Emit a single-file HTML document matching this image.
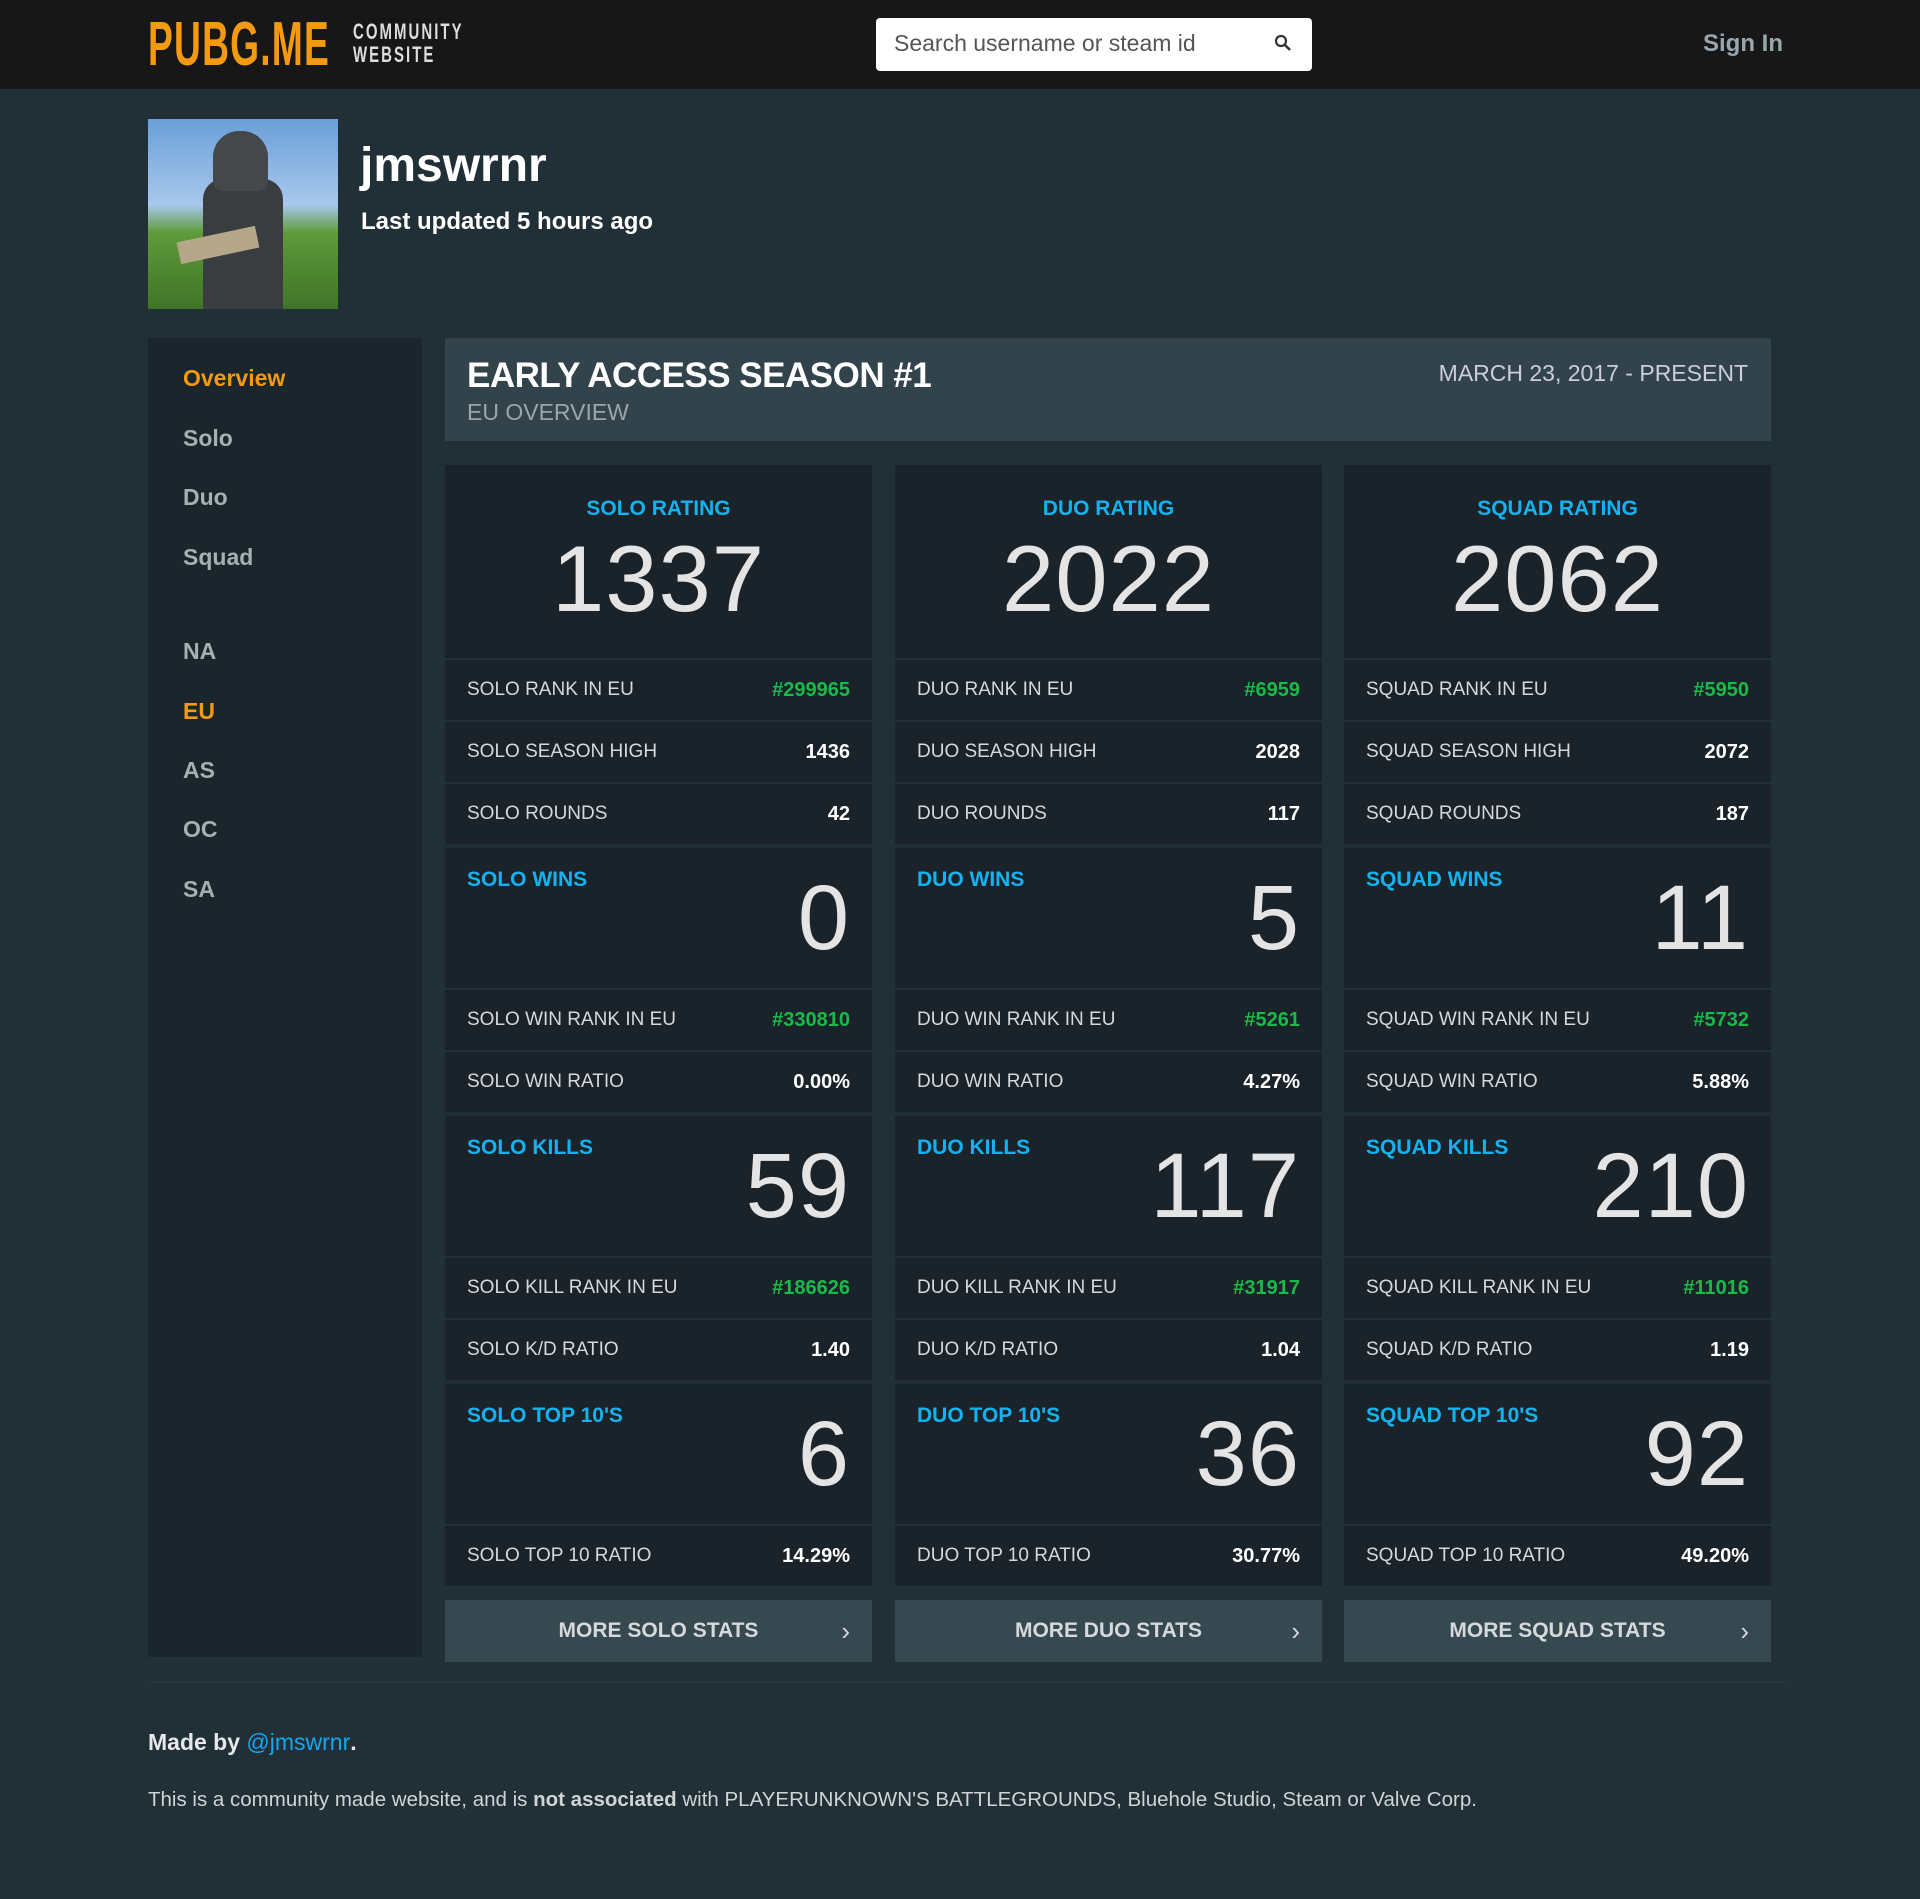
<!DOCTYPE html>
<html><head><meta charset="utf-8"><style>
*{box-sizing:border-box;margin:0;padding:0}
body{width:1920px;height:1899px;background:#212f37;font-family:"Liberation Sans",sans-serif;color:#fff;position:relative;overflow:hidden}
.hdr{position:absolute;left:0;top:0;width:1920px;height:89px;background:#171717}
.logo{position:absolute;left:148px;top:14px;font-family:"Liberation Sans Narrow","Liberation Sans",sans-serif;font-weight:bold;font-size:62px;color:#f39a12;transform:scaleX(.6);transform-origin:left;letter-spacing:2px;line-height:62px}
.logo2{position:absolute;left:353px;top:20px;font-weight:bold;font-size:22px;line-height:23px;color:#ddd;letter-spacing:3px;transform:scaleX(.68);transform-origin:left}
.search{position:absolute;left:876px;top:18px;width:436px;height:53px;background:#fff;border-radius:4px;color:#555;font-size:23px;padding:12px 18px}
.search svg{position:absolute;right:20px;top:16px}
.signin{position:absolute;left:1703px;top:30px;font-size:24px;color:#9aa6ad;font-weight:bold}
.avatar{position:absolute;left:148px;top:119px;width:190px;height:190px;background:linear-gradient(#6a9fd8 0%,#a8c8ec 45%,#5f9a3a 60%,#3f7428 100%);overflow:hidden}
.avatar .p{position:absolute;left:55px;top:60px;width:80px;height:140px;background:#3a3d40;border-radius:20px 20px 4px 4px}
.avatar .h{position:absolute;left:65px;top:12px;width:55px;height:60px;background:#45484a;border-radius:26px 26px 10px 10px}
.avatar .g{position:absolute;left:30px;top:115px;width:80px;height:22px;background:#b5a88a;transform:rotate(-12deg)}
.name{position:absolute;left:360px;top:138px;font-size:48px;font-weight:bold}
.upd{position:absolute;left:361px;top:208px;font-size:24px;font-weight:bold}
.side{position:absolute;left:148px;top:338px;width:274px;height:1319px;background:#1a262c}
.side div{position:absolute;left:35px;font-size:23px;font-weight:bold;color:#a5afb4}
.side .on{color:#f39a12}
.mh{position:absolute;left:445px;top:338px;width:1326px;height:103px;background:#32434b}
.mh h1{position:absolute;left:22px;top:18px;font-size:35px;font-weight:bold;letter-spacing:-.5px}
.mh .s{position:absolute;left:22px;top:61px;font-size:23px;color:#9aa6ad}
.mh .d{position:absolute;right:23px;top:22px;font-size:23px;color:#ccd}
.col{position:absolute;top:465px;width:427px}
.card{background:#1a2329;position:relative}
.rat{height:193px;text-align:center}
.rat .l{padding-top:32px;font-size:21px;font-weight:bold;color:#16b2f0}
.rat .n{font-size:94px;color:#e4e4e4;margin-top:4px;letter-spacing:1px}
.row{height:60px;margin-top:2px;display:flex;justify-content:space-between;align-items:center;padding:0 22px;font-size:19px;color:#d6d9db}
.row b{color:#fff;font-size:20px}
.row b.g{color:#1ab94a}
.big{height:140px;margin-top:4px}
.big .l{position:absolute;left:22px;top:20px;font-size:21px;font-weight:bold;color:#16b2f0}
.big .n{position:absolute;right:22px;top:18px;font-size:92px;color:#e4e4e4;letter-spacing:1px}
.btn{margin-top:14px;height:62px;background:#364850;text-align:center;font-size:21px;font-weight:bold;color:#d6d9db;line-height:62px;position:relative}
.btn span{position:absolute;right:22px;top:0;font-size:26px;font-weight:normal}
.line{position:absolute;left:148px;top:1681px;width:1640px;height:2px;background:#26353d}
.made{position:absolute;left:148px;top:1729px;font-size:23px;font-weight:bold;color:#e6e8ea}
.made a{color:#16a6f0;font-weight:normal}
.disc{position:absolute;left:148px;top:1788px;font-size:20.5px;color:#d0d4d6}
</style></head><body>
<div class="hdr">
<div class="logo">PUBG.ME</div>
<div class="logo2">COMMUNITY<br>WEBSITE</div>
<div class="search">Search username or steam id<svg width="18" height="18" viewBox="0 0 18 18"><circle cx="7" cy="7" r="5" fill="none" stroke="#333" stroke-width="2.2"/><path d="M11 11l5 5" stroke="#333" stroke-width="2.6"/></svg></div>
<div class="signin">Sign In</div>
</div>
<div class="avatar"><div class="p"></div><div class="h"></div><div class="g"></div></div>
<div class="name">jmswrnr</div>
<div class="upd">Last updated 5 hours ago</div>
<div class="side">
<div class="on" style="top:27px">Overview</div>
<div style="top:87px">Solo</div>
<div style="top:146px">Duo</div>
<div style="top:206px">Squad</div>
<div style="top:300px">NA</div>
<div class="on" style="top:360px">EU</div>
<div style="top:419px">AS</div>
<div style="top:478px">OC</div>
<div style="top:538px">SA</div>
</div>
<div class="mh"><h1>EARLY ACCESS SEASON #1</h1><div class="s">EU OVERVIEW</div><div class="d">MARCH 23, 2017 - PRESENT</div></div>

<div class="col" style="left:445px">
<div class="card rat"><div class="l">SOLO RATING</div><div class="n">1337</div></div>
<div class="card row"><span>SOLO RANK IN EU</span><b class="g">#299965</b></div>
<div class="card row"><span>SOLO SEASON HIGH</span><b>1436</b></div>
<div class="card row"><span>SOLO ROUNDS</span><b>42</b></div>
<div class="card big"><div class="l">SOLO WINS</div><div class="n">0</div></div>
<div class="card row"><span>SOLO WIN RANK IN EU</span><b class="g">#330810</b></div>
<div class="card row"><span>SOLO WIN RATIO</span><b>0.00%</b></div>
<div class="card big"><div class="l">SOLO KILLS</div><div class="n">59</div></div>
<div class="card row"><span>SOLO KILL RANK IN EU</span><b class="g">#186626</b></div>
<div class="card row"><span>SOLO K/D RATIO</span><b>1.40</b></div>
<div class="card big"><div class="l">SOLO TOP 10'S</div><div class="n">6</div></div>
<div class="card row"><span>SOLO TOP 10 RATIO</span><b>14.29%</b></div>
<div class="btn">MORE SOLO STATS<span>›</span></div>
</div>

<div class="col" style="left:895px">
<div class="card rat"><div class="l">DUO RATING</div><div class="n">2022</div></div>
<div class="card row"><span>DUO RANK IN EU</span><b class="g">#6959</b></div>
<div class="card row"><span>DUO SEASON HIGH</span><b>2028</b></div>
<div class="card row"><span>DUO ROUNDS</span><b>117</b></div>
<div class="card big"><div class="l">DUO WINS</div><div class="n">5</div></div>
<div class="card row"><span>DUO WIN RANK IN EU</span><b class="g">#5261</b></div>
<div class="card row"><span>DUO WIN RATIO</span><b>4.27%</b></div>
<div class="card big"><div class="l">DUO KILLS</div><div class="n">117</div></div>
<div class="card row"><span>DUO KILL RANK IN EU</span><b class="g">#31917</b></div>
<div class="card row"><span>DUO K/D RATIO</span><b>1.04</b></div>
<div class="card big"><div class="l">DUO TOP 10'S</div><div class="n">36</div></div>
<div class="card row"><span>DUO TOP 10 RATIO</span><b>30.77%</b></div>
<div class="btn">MORE DUO STATS<span>›</span></div>
</div>

<div class="col" style="left:1344px">
<div class="card rat"><div class="l">SQUAD RATING</div><div class="n">2062</div></div>
<div class="card row"><span>SQUAD RANK IN EU</span><b class="g">#5950</b></div>
<div class="card row"><span>SQUAD SEASON HIGH</span><b>2072</b></div>
<div class="card row"><span>SQUAD ROUNDS</span><b>187</b></div>
<div class="card big"><div class="l">SQUAD WINS</div><div class="n">11</div></div>
<div class="card row"><span>SQUAD WIN RANK IN EU</span><b class="g">#5732</b></div>
<div class="card row"><span>SQUAD WIN RATIO</span><b>5.88%</b></div>
<div class="card big"><div class="l">SQUAD KILLS</div><div class="n">210</div></div>
<div class="card row"><span>SQUAD KILL RANK IN EU</span><b class="g">#11016</b></div>
<div class="card row"><span>SQUAD K/D RATIO</span><b>1.19</b></div>
<div class="card big"><div class="l">SQUAD TOP 10'S</div><div class="n">92</div></div>
<div class="card row"><span>SQUAD TOP 10 RATIO</span><b>49.20%</b></div>
<div class="btn">MORE SQUAD STATS<span>›</span></div>
</div>

<div class="line"></div>
<div class="made">Made by <a>@jmswrnr</a>.</div>
<div class="disc">This is a community made website, and is <b>not associated</b> with PLAYERUNKNOWN'S BATTLEGROUNDS, Bluehole Studio, Steam or Valve Corp.</div>
</body></html>
